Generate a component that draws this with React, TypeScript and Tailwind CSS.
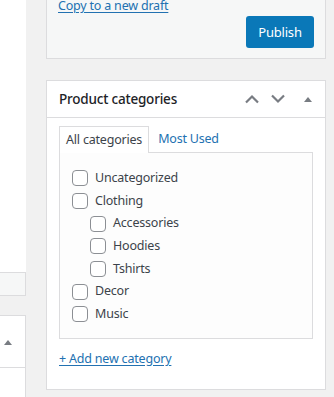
import React from 'react';

const categories = [
  { name: 'Uncategorized', depth: 0 },
  { name: 'Clothing', depth: 0 },
  { name: 'Accessories', depth: 1 },
  { name: 'Hoodies', depth: 1 },
  { name: 'Tshirts', depth: 1 },
  { name: 'Decor', depth: 0 },
  { name: 'Music', depth: 0 },
];

const Triangle = () => (
  <svg width="10" height="8" viewBox="0 0 10 8">
    <path d="M1 7 L5 2 L9 7 Z" fill="#787c82" />
  </svg>
);

const Chevron = ({ up }: { up?: boolean }) => (
  <svg width="16" height="10" viewBox="0 0 16 10" fill="none" stroke="#787c82" strokeWidth="2.2">
    {up ? <path d="M2 8.5 L8 2.5 L14 8.5" /> : <path d="M2 1.5 L8 7.5 L14 1.5" />}
  </svg>
);

export default function App() {
  return (
    <div
      className="w-[334px] h-[397px] flex overflow-hidden bg-[#f1f1f1] text-[12.5px] tracking-[-0.2px] text-[#3c434a]"
      style={{ fontFamily: '"Noto Sans", "Open Sans", sans-serif' }}
    >
      {/* left column */}
      <div className="w-[26px] shrink-0 flex flex-col">
        <div className="h-[272px] bg-white" />
        <div className="h-[24px] bg-[#f6f7f7] border border-l-0 border-[#dcdcde]" />
        <div className="h-[19px]" />
        <div className="flex-1 bg-white border border-l-0 border-b-0 border-[#dcdcde] flex flex-col">
          <div className="h-[52px] border-b border-[#dcdcde] flex items-center pl-[3px]">
            <Triangle />
          </div>
        </div>
      </div>

      {/* main column */}
      <div className="ml-[20px] w-[280px] shrink-0 flex flex-col">
        {/* publish box */}
        <div className="h-[59px] bg-[#f6f7f7] border border-t-0 border-[#dcdcde] px-[11px] flex flex-col">
          <a className="-mt-[3px] leading-[17px] text-[#2271b1] underline underline-offset-[2px]">
            Copy to a new draft
          </a>
          <div className="flex justify-end mt-[2px]">
            <button className="h-[32px] w-[68px] rounded-[3px] bg-[#0a78b8] text-white text-[13px] leading-none">
              Publish
            </button>
          </div>
        </div>

        {/* product categories */}
        <div className="mt-[21px] h-[310px] bg-white border border-[#dcdcde] flex flex-col">
          <div className="h-[37px] border-b border-[#dcdcde] flex items-center pl-[12px] pr-[12px]">
            <h2 className="flex-1 text-[13.5px] tracking-[-0.2px] font-medium text-[#1d2327]">Product categories</h2>
            <div className="flex items-center">
              <Chevron up />
              <span className="ml-[10px]"><Chevron /></span>
              <span className="ml-[17px]"><Triangle /></span>
            </div>
          </div>

          <div className="px-[12px] pt-[8px]">
            <div className="flex items-end">
              <div className="h-[27px] px-[6px] border border-b-0 border-[#dcdcde] bg-white flex items-center -mb-px relative text-[#3c434a]">
                All categories
              </div>
              <div className="h-[26px] px-[9px] flex items-center text-[#2271b1]">Most Used</div>
            </div>
            <div className="w-[254px] border border-[#dcdcde] bg-[#fdfdfd] pl-[12px] pt-[14px] pb-[12px]">
              {categories.map((c) => (
                <label
                  key={c.name}
                  className={`h-[22.667px] flex items-center gap-[7px] ${c.depth ? 'pl-[18px]' : ''}`}
                >
                  <span className="w-[16px] h-[16px] rounded-[4px] border border-[#8c8f94] bg-white shrink-0" />
                  <span className="text-[#3c434a]">{c.name}</span>
                </label>
              ))}
            </div>
            <a className="block mt-[11px] leading-[18px] text-[#2271b1] underline underline-offset-[2px]">
              + Add new category
            </a>
          </div>
        </div>
      </div>
    </div>
  );
}
